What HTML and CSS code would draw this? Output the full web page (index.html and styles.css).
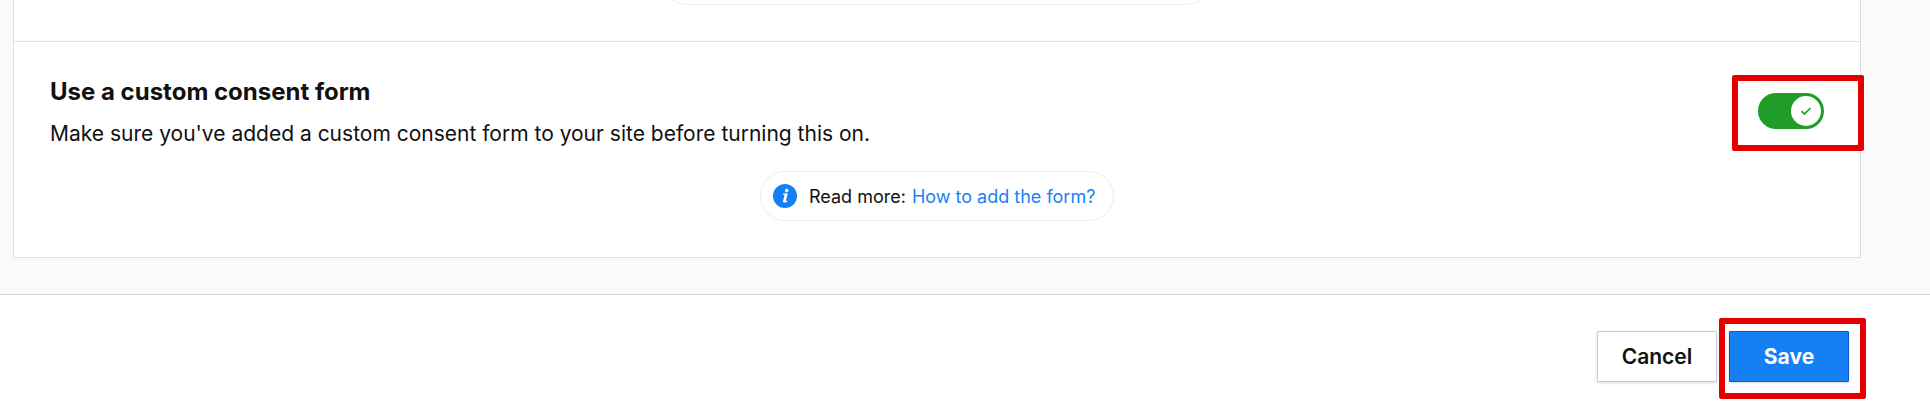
FILE: index.html
```html
<!DOCTYPE html>
<html lang="en">
<head>
<meta charset="utf-8">
<title>Consent form settings</title>
<link rel="stylesheet" href="styles.css">
</head>
<body>
<main class="content">
  <section class="card">
    <div class="card-top">
      <div class="pill-clipped"></div>
    </div>
    <div class="card-body">
      <div class="row">
        <div class="row-text">
          <h2 class="title">Use a custom consent form</h2>
          <p class="desc">Make sure you've added a custom consent form to your site before turning this on.</p>
        </div>
        <div class="toggle-slot highlight-toggle">
          <div class="toggle">
            <span class="knob">
              <svg class="check" viewBox="0 0 12 10" width="12" height="10"><path d="M1.500 5.200 4.400 8 10.500 2" fill="none" stroke="#1f9d28" stroke-width="1.700"/></svg>
            </span>
          </div>
        </div>
      </div>
      <div class="pill-wrap">
        <div class="pill">
          <svg class="info" viewBox="0 0 24 24" width="24" height="24"><circle cx="12" cy="12" r="12" fill="#1480f3"/><path d="M9.900 9.600h4.900l-1.900 7c-.1.500.5.600 1.600 0l-.2 1.200c-1.500.9-4.500 1.400-4.300-.8l1.400-5.500c.1-.5-.3-.7-1.200-.7zM13.700 4.800a1.800 1.800 0 1 1 0 3.600 1.800 1.800 0 0 1 0-3.600z" fill="#fff"/></svg>
          <span class="pill-label">Read more:</span>
          <a class="pill-link" href="#">How to add the form?</a>
        </div>
      </div>
    </div>
  </section>
</main>
<footer class="footer">
  <button class="btn btn-cancel" type="button">Cancel</button>
  <span class="save-slot highlight-save">
    <button class="btn btn-save" type="button">Save</button>
  </span>
</footer>
</body>
</html>
```

FILE: styles.css
```css
*, *::after { box-sizing: border-box; }
html, body { margin: 0; padding: 0; }
body {
  width: 1930px;
  height: 412px;
  overflow: hidden;
  background: #fff;
  font-family: Inter, "Liberation Sans", sans-serif;
  color: #111;
}
.content {
  height: 295px;
  padding: 0 69px 0 13px;
  background: #fafafa;
  border-bottom: 1px solid #d9d9d9;
}
.card {
  height: 258px;
  background: #fff;
  border: 1px solid #dfdfdf;
  border-top: 0;
}
.card-top {
  height: 42px;
  display: flex;
  justify-content: center;
  border-bottom: 1px solid #dfdfdf;
}
.pill-clipped {
  width: 526px;
  height: 5px;
  border: 1px solid #ececec;
  border-top: 0;
  border-radius: 0 0 18px 18px / 0 0 5px 5px;
}
.card-body { padding: 0 36px; }
.row {
  display: flex;
  justify-content: space-between;
  align-items: flex-start;
}
.row-text { padding-top: 35px; }
.title {
  margin: 0;
  font-size: 24px;
  line-height: 30px;
  font-weight: 700;
  color: #111;
}
.desc {
  margin: 14px 0 0;
  font-size: 21px;
  line-height: 26px;
  font-weight: 400;
  color: #111;
}
.toggle-slot { position: relative; margin-top: 51px; }
.toggle {
  width: 66px;
  height: 36px;
  border-radius: 18px;
  background: #1f9d28;
  display: flex;
  justify-content: flex-end;
  align-items: center;
  padding-right: 3px;
}
.knob {
  width: 30px;
  height: 30px;
  border-radius: 50%;
  background: #fff;
  display: flex;
  align-items: center;
  justify-content: center;
}
.highlight-toggle::after {
  content: "";
  position: absolute;
  left: -26px;
  top: -18px;
  width: 132px;
  height: 76px;
  border: 6px solid #e30000;
  border-radius: 2px;
}
.pill-wrap {
  display: flex;
  justify-content: center;
  margin-top: 24px;
}
.pill {
  display: flex;
  align-items: center;
  width: 354px;
  height: 50px;
  padding: 0 12px;
  border: 1px solid #ececec;
  border-radius: 25px;
  font-size: 18px;
}
.info { flex: none; margin-right: 12px; }
.pill-label { color: #111; margin-right: 6px; }
.pill-link { color: #1a80f5; text-decoration: none; }
.footer {
  height: 117px;
  display: flex;
  justify-content: flex-end;
  align-items: flex-start;
  padding: 36px 81px 0 0;
  background: #fff;
}
.btn {
  width: 120px;
  height: 51px;
  font-family: inherit;
  font-size: 21px;
  border-radius: 1px;
  box-shadow: 0 1px 3px rgba(0,0,0,.15);
}
.btn-cancel {
  font-weight: 600;
  background: #fff;
  color: #111;
  border: 1px solid #ccc;
  margin-right: 12px;
}
.btn-save {
  display: block;
  font-weight: 700;
  background: #1480f3;
  color: #fff;
  border: 1px solid #0b57c9;
}
.save-slot { position: relative; display: block; }
.highlight-save::after {
  content: "";
  position: absolute;
  left: -10px;
  top: -13px;
  width: 147px;
  height: 81px;
  border: 6px solid #e30000;
  border-radius: 2px;
}
```
